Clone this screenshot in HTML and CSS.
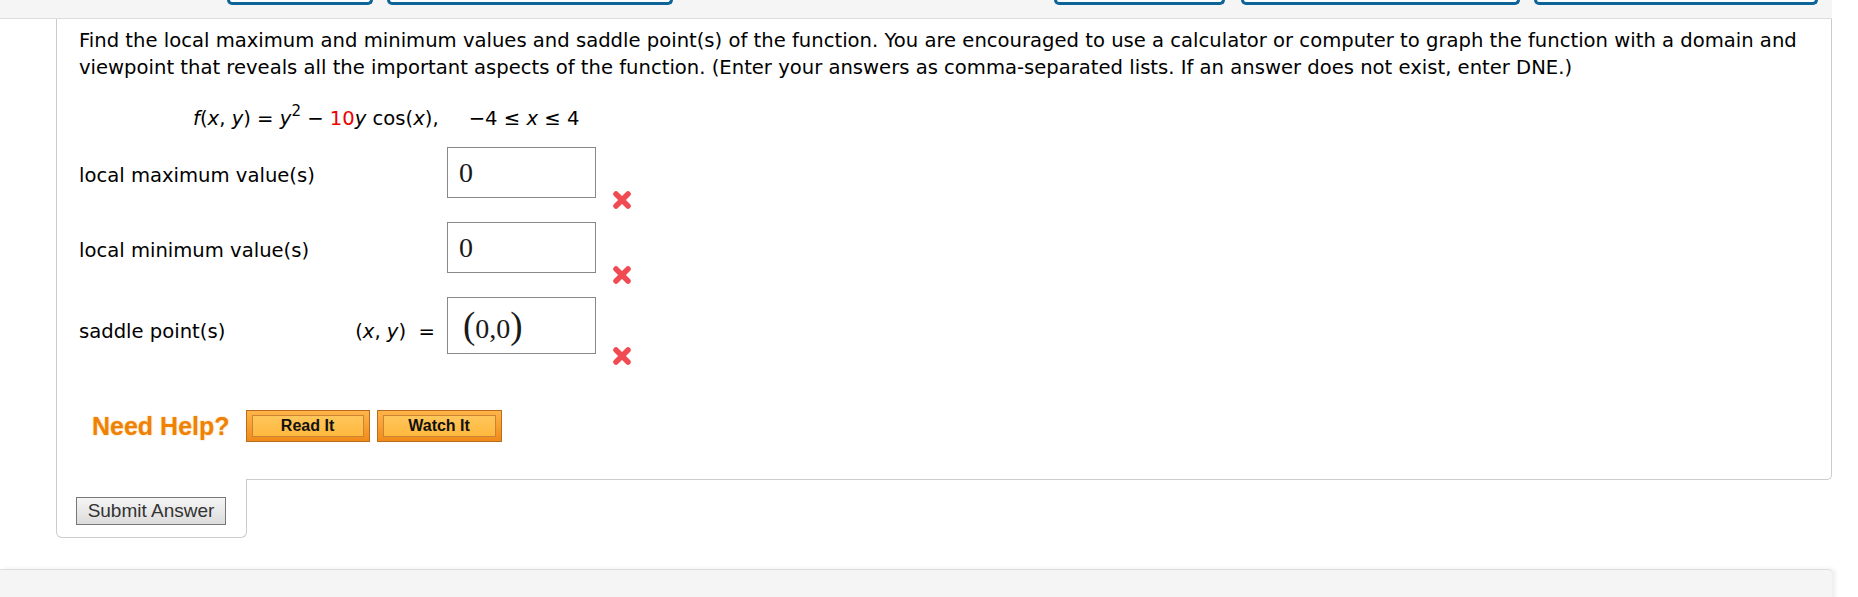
FILE: index.html
```html
<!DOCTYPE html>
<html lang="en">
<head>
    <meta charset="UTF-8">
    <meta name="viewport" content="width=device-width, initial-scale=1.0">
    <title>Question</title>
    <link rel="stylesheet" href="styles.css">
</head>
<body>
    <div class="page">
        <div class="topbar">
            <div class="tabs">
                <div class="tab tab-a"></div>
                <div class="tab tab-b"></div>
            </div>
            <div class="tabs tabs-right">
                <div class="tab tab-c"></div>
                <div class="tab tab-d"></div>
                <div class="tab tab-e"></div>
            </div>
        </div>

        <div class="question">
            <p class="prompt">Find the local maximum and minimum values and saddle point(s) of the function. You are encouraged to use a calculator or computer to graph the function with a domain and viewpoint that reveals all the important aspects of the function. (Enter your answers as comma-separated lists. If an answer does not exist, enter DNE.)</p>
            <div class="formula"><i>f</i>(<i>x</i>, <i>y</i>) = <i>y</i><sup>2</sup> &minus; <span class="red">10</span><i>y</i> cos(<i>x</i>),<span class="gap"></span>&minus;4 &le; <i>x</i> &le; 4</div>

            <div class="answers">
                <div class="row">
                    <div class="label">local maximum value(s)</div>
                    <div class="prefix"></div>
                    <div class="answer">0</div>
                    <svg class="wrong" width="20" height="20" viewBox="0 0 20 20"><path d="M4 4 L16 16 M16 4 L4 16" stroke="#f04a52" stroke-width="5.5" stroke-linecap="round"/></svg>
                </div>
                <div class="row">
                    <div class="label">local minimum value(s)</div>
                    <div class="prefix"></div>
                    <div class="answer">0</div>
                    <svg class="wrong" width="20" height="20" viewBox="0 0 20 20"><path d="M4 4 L16 16 M16 4 L4 16" stroke="#f04a52" stroke-width="5.5" stroke-linecap="round"/></svg>
                </div>
                <div class="row">
                    <div class="label">saddle point(s)</div>
                    <div class="prefix">(<i>x</i>, <i>y</i>) &nbsp;=</div>
                    <div class="answer answer-tall"><span class="paren">(</span>0,0<span class="paren">)</span></div>
                    <svg class="wrong" width="20" height="20" viewBox="0 0 20 20"><path d="M4 4 L16 16 M16 4 L4 16" stroke="#f04a52" stroke-width="5.5" stroke-linecap="round"/></svg>
                </div>
            </div>

            <div class="help">
                <span class="help-title">Need Help?</span>
                <a class="help-btn"><span>Read It</span></a>
                <a class="help-btn help-btn-wide"><span>Watch It</span></a>
            </div>
        </div>

        <div class="submit-tab">
            <button class="submit" type="button">Submit Answer</button>
        </div>

        <div class="footer"></div>
    </div>
</body>
</html>
```

FILE: styles.css
```css
body { margin: 0; font-family: "DejaVu Sans", Verdana, sans-serif; font-size: 19.6px; color: #000; background: #fff; }
.page { width: 1832px; }

/* top strip with the hanging tabs */
.topbar { height: 18px; background: #f5f5f5; border-bottom: 1px solid #ddd; display: flex; align-items: flex-start; }
.tabs { display: flex; gap: 14px; margin-left: 227px; }
.tabs-right { margin-left: auto; padding-right: 14px; }
.tab { height: 2px; border: 3px solid #0c6499; border-top: none; border-radius: 0 0 6px 6px; background: #fff; }
.tab-a { width: 140px; }
.tab-b { width: 280px; }
.tab-c { width: 165px; margin-right: 2px; }
.tab-d { width: 273px; }
.tab-e { width: 278px; }

/* question box */
.question { margin-left: 56px; border: 1px solid #ccc; border-top: none; border-radius: 0 0 5px 0; padding: 8px 10px 37px 22px; }
.prompt { margin: 0; line-height: 27px; }
.formula { margin: 24px 0 0 114px; line-height: 27px; }
.formula sup { font-size: 15px; line-height: 0; vertical-align: 9px; }
.formula .gap { display: inline-block; width: 30px; }
.red { color: #e00; }

.answers { margin-top: 15px; }
.row { display: flex; align-items: baseline; }
.row + .row { margin-top: 24px; }
.label { width: 254px; }
.prefix { width: 102px; padding-right: 12px; text-align: right; }
.answer { box-sizing: border-box; width: 149px; height: 51px; border: 1px solid #888; padding: 1px 0 0 11px; font-family: "Liberation Serif", "Times New Roman", serif; font-size: 28px; line-height: 48px; color: #1a1a1a; }
.answer-tall { height: 57px; line-height: 54px; padding-left: 15px; }
.paren { font-size: 37px; font-weight: 300; }
.wrong { align-self: flex-end; margin: 0 0 -12px 16px; }

/* need help row */
.help { display: flex; align-items: center; margin-top: 56px; padding-left: 13px; }
.help-title { font-family: "Liberation Sans", Arial, sans-serif; font-weight: bold; font-size: 25px; color: #ef8204; text-shadow: 0 0 2px rgba(239,130,4,0.45); margin-right: 16px; }
.help-btn { box-sizing: border-box; width: 124px; height: 32px; padding: 4px 5px; margin-right: 7px; border: 1px solid #b86c1c; background: linear-gradient(#ffb44a, #f08a1a); display: flex; }
.help-btn-wide { width: 125px; }
.help-btn span { flex: 1; border: 1px solid #c98632; background: linear-gradient(#ffc65a, #ffb83e); font-family: "Liberation Sans", Arial, sans-serif; font-weight: bold; font-size: 16px; color: #111; text-align: center; line-height: 20px; }

/* submit tab under the box */
.submit-tab { box-sizing: border-box; width: 191px; margin: -1px 0 0 56px; border: 1px solid #ccc; border-top: none; border-radius: 0 0 6px 6px; background: #fff; padding: 18px 0 12px 19px; }
.submit { width: 150px; height: 28px; margin: 0; border: 1px solid #777; background: linear-gradient(#f5f5f5, #dcdcdc); font-family: "Liberation Sans", Arial, sans-serif; font-size: 19px; color: #333; padding: 0; }

.footer { margin-top: 31px; height: 40px; background: #f5f5f5; border-top: 1px solid #ddd; border-radius: 0 4px 0 0; box-shadow: 3px 0 5px rgba(0,0,0,0.08); }
```
